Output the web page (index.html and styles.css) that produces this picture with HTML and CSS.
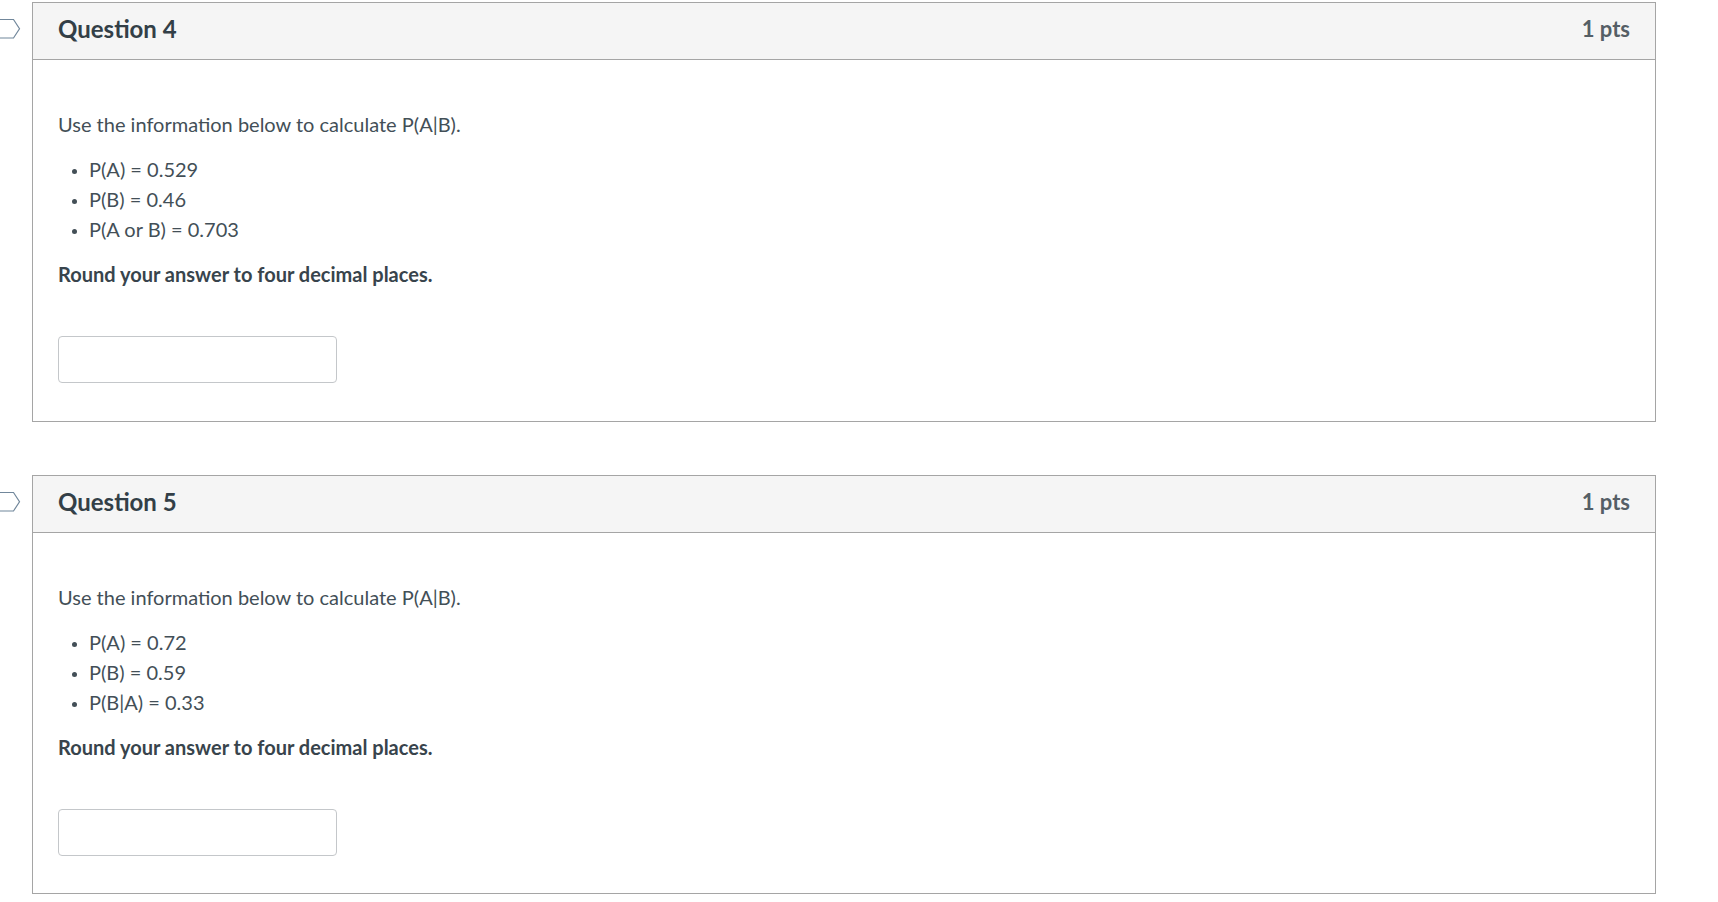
FILE: index.html
```html
<!DOCTYPE html>
<html lang="en">
<head>
    <meta charset="UTF-8">
    <meta name="viewport" content="width=device-width, initial-scale=1.0">
    <title>Quiz</title>

    <link rel="stylesheet" href="styles.css">
</head>
<body>
    <div class="questions">
        <div class="question">
            <svg class="flag" width="21" height="21" viewBox="0 0 21 21"><path d="M-4 1.5H13.5L19.5 10.75L13.5 20H-4" fill="#fff" stroke="#71879b" stroke-width="1.2"/></svg>
            <div class="questionHeader">
                <h2>Question 4</h2>
                <span class="points">1 pts</span>
            </div>
            <div class="questionBody">
                <p>Use the information below to calculate P(A|B).</p>
                <ul>
                    <li>P(A) = 0.529</li>
                    <li>P(B) = 0.46</li>
                    <li>P(A or B) = 0.703</li>
                </ul>
                <p><strong>Round your answer to four decimal places.</strong></p>
                <input class="answer" type="text">
            </div>
        </div>

        <div class="question">
            <svg class="flag" width="21" height="21" viewBox="0 0 21 21"><path d="M-4 1.5H13.5L19.5 10.75L13.5 20H-4" fill="#fff" stroke="#71879b" stroke-width="1.2"/></svg>
            <div class="questionHeader">
                <h2>Question 5</h2>
                <span class="points">1 pts</span>
            </div>
            <div class="questionBody">
                <p>Use the information below to calculate P(A|B).</p>
                <ul>
                    <li>P(A) = 0.72</li>
                    <li>P(B) = 0.59</li>
                    <li>P(B|A) = 0.33</li>
                </ul>
                <p><strong>Round your answer to four decimal places.</strong></p>
                <input class="answer" type="text">
            </div>
        </div>
    </div>
</body>
</html>
```

FILE: styles.css
```css
html, body {
    margin: 0;
    height: 100%;
    overflow: hidden;
    background-color: #fff;
}

body {
    color: #333f47;
    font-family: Lato, "Liberation Sans", sans-serif;
    font-size: 20px;
}

.questions {
    padding: 2px 62px 0 32px;
}

.question {
    position: relative;
    border: 1px solid #a5a5a5;
    margin-bottom: 53px;
}

.question:last-child {
    margin-bottom: 0;
}

.flag {
    position: absolute;
    left: -33px;
    top: 15px;
}

.questionHeader {
    display: flex;
    justify-content: space-between;
    align-items: center;
    box-sizing: border-box;
    height: 57px;
    padding: 0 25px 6px;
    background-color: #f5f5f5;
    border-bottom: 1px solid #a5a5a5;
}

.questionHeader h2 {
    margin: 0;
    font-size: 24px;
    font-weight: 700;
}

.points {
    font-size: 22px;
    font-weight: 700;
    color: #555f66;
}

.questionBody {
    box-sizing: border-box;
    height: 361px;
    padding: 49px 25px 0;
    color: #434f57;
}

.question:last-child .questionBody {
    height: 360px;
}

.questionBody p {
    margin: 0 0 15px;
    line-height: 30px;
}

.questionBody strong {
    color: #38444c;
}

.questionBody ul {
    margin: 0 0 15px;
    padding-left: 31px;
}

.questionBody li {
    line-height: 30px;
}

.questionBody li::marker {
    font-size: 15px;
}

.answer {
    display: block;
    box-sizing: border-box;
    width: 279px;
    height: 47px;
    margin-top: 47px;
    border: 1px solid #c4c7ca;
    border-radius: 4px;
    background-color: #fff;
}
```
